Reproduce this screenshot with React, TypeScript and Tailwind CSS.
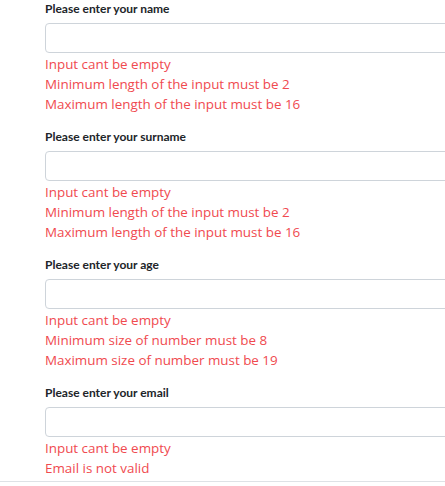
import React from 'react';

const sections = [
  {
    label: 'Please enter your name',
    errors: ['Input cant be empty', 'Minimum length of the input must be 2', 'Maximum length of the input must be 16'],
  },
  {
    label: 'Please enter your surname',
    errors: ['Input cant be empty', 'Minimum length of the input must be 2', 'Maximum length of the input must be 16'],
  },
  {
    label: 'Please enter your age',
    errors: ['Input cant be empty', 'Minimum size of number must be 8', 'Maximum size of number must be 19'],
  },
  {
    label: 'Please enter your email',
    errors: ['Input cant be empty', 'Email is not valid'],
  },
];

const App = () => {
  return (
    <div className="w-[445px] h-[486px] overflow-hidden bg-white font-['Open_Sans',sans-serif]">
      <div className="border-b border-[#dee2e6]">
        <form className="pl-[45px] w-[620px]">
          {sections.map((s, i) => (
            <div key={i} className={i < sections.length - 1 ? 'mb-[14px]' : 'mb-[3px]'}>
              <label className="block font-['Lato',sans-serif] text-[12px] leading-[18px] font-bold text-[#212529]">
                {s.label}
              </label>
              <input
                type="text"
                className="mt-[5px] block w-full h-[30px] rounded border border-[#ced4da] bg-white"
              />
              <div className="pt-px">
                {s.errors.map((e, j) => (
                  <div key={j} className="text-[13.4px] leading-[20px] text-[#f04a4f]">
                    {e}
                  </div>
                ))}
              </div>
            </div>
          ))}
        </form>
      </div>
    </div>
  );
};

export default App;
